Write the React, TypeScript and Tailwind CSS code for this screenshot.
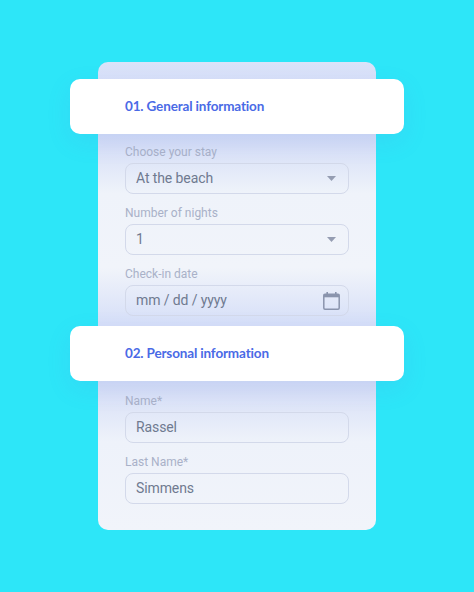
import * as React from "react";

function Caret() {
  return (
    <svg width="9" height="5" viewBox="0 0 9 5">
      <path d="M0 0h9L4.5 5z" fill="#959db2" />
    </svg>
  );
}

function CalendarIcon() {
  return (
    <svg width="17" height="18" viewBox="0 0 17 18" fill="none" className="mr-[-4px]">
      <rect x="0.8" y="2.3" width="15.4" height="14.9" rx="1.2" stroke="#8a94ad" strokeWidth="1.5" />
      <rect x="0.8" y="2.3" width="15.4" height="3" fill="#8a94ad" />
      <rect x="3.4" y="0" width="1.6" height="3" fill="#8a94ad" />
      <rect x="12" y="0" width="1.6" height="3" fill="#8a94ad" />
    </svg>
  );
}

function Section({ children }: { children: React.ReactNode }) {
  return (
    <div className="relative z-10 -mx-[28px] flex h-[55px] items-center rounded-[10px] bg-white pl-[55px] shadow-[0_8px_24px_rgba(90,120,225,0.12)]">
      <h2 className="font-['Lato',sans-serif] text-[13.5px] font-bold tracking-[-0.15px] text-[#4a6ae6]">{children}</h2>
    </div>
  );
}

function Field({
  label,
  value,
  icon,
  className,
}: {
  label: string;
  value: string;
  icon?: React.ReactNode;
  className?: string;
}) {
  return (
    <div className={className}>
      <label className="block pt-[1px] text-[12px] leading-[15px] text-[#a9b1c8]">{label}</label>
      <div className="mt-[3px] flex h-[31px] items-center justify-between rounded-[8px] border border-[#d3d9ea] pl-[10px] pr-[12px] text-[14px] tracking-[-0.1px] text-[#6f7a90]">
        <span>{value}</span>
        {icon}
      </div>
    </div>
  );
}

export default function App() {
  return (
    <div className="h-[592px] w-[474px] overflow-hidden bg-[#2de6f8] pt-[62px] font-['Roboto',sans-serif]">
      <div className="ml-[98px] h-[468px] w-[278px] rounded-[10px] bg-[linear-gradient(180deg,#dbe3f9_0%,#d0daf6_15%,#eff3fa_28%,#f1f4fa_44%,#d6dff8_56%,#d3dcf6_68%,#eef2fa_81%,#f1f4fa_100%)] pt-[17px]">
        <Section>01. General information</Section>
        <div className="px-[27px] pt-[10px] pb-[10px]">
          <Field label="Choose your stay" value="At the beach" icon={<Caret />} />
          <Field label="Number of nights" value="1" icon={<Caret />} className="mt-[11px]" />
          <Field label="Check-in date" value="mm / dd / yyyy" icon={<CalendarIcon />} className="mt-[11px]" />
        </div>
        <Section>02. Personal information</Section>
        <div className="px-[27px] pt-[12px]">
          <Field label="Name*" value="Rassel" />
          <Field label="Last Name*" value="Simmens" className="mt-[11px]" />
        </div>
      </div>
    </div>
  );
}
